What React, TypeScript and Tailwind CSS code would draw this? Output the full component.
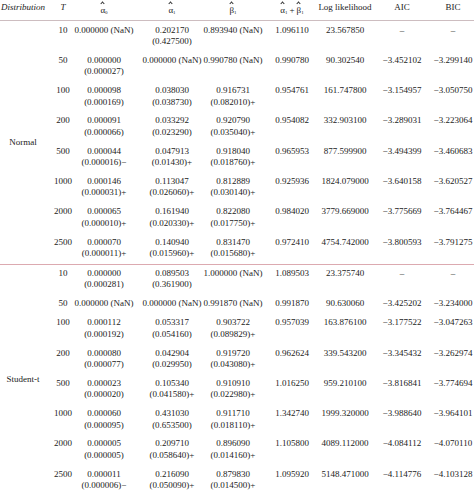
import React from "react";

type Row = {
  t: string;
  a0: string[];
  a1: string[];
  b1: string[];
  s: string;
  ll: string;
  aic: string;
  bic: string;
};

const normal: Row[] = [
  { t: "10", a0: ["0.000000 (NaN)"], a1: ["0.202170", "(0.427500)"], b1: ["0.893940 (NaN)"], s: "1.096110", ll: "23.567850", aic: "–", bic: "–" },
  { t: "50", a0: ["0.000000", "(0.000027)"], a1: ["0.000000 (NaN)"], b1: ["0.990780 (NaN)"], s: "0.990780", ll: "90.302540", aic: "−3.452102", bic: "−3.299140" },
  { t: "100", a0: ["0.000098", "(0.000169)"], a1: ["0.038030", "(0.038730)"], b1: ["0.916731", "(0.082010)+"], s: "0.954761", ll: "161.747800", aic: "−3.154957", bic: "−3.050750" },
  { t: "200", a0: ["0.000091", "(0.000066)"], a1: ["0.033292", "(0.023290)"], b1: ["0.920790", "(0.035040)+"], s: "0.954082", ll: "332.903100", aic: "−3.289031", bic: "−3.223064" },
  { t: "500", a0: ["0.000044", "(0.000016)−"], a1: ["0.047913", "(0.01430)+"], b1: ["0.918040", "(0.018760)+"], s: "0.965953", ll: "877.599900", aic: "−3.494399", bic: "−3.460683" },
  { t: "1000", a0: ["0.000146", "(0.000031)+"], a1: ["0.113047", "(0.026060)+"], b1: ["0.812889", "(0.030140)+"], s: "0.925936", ll: "1824.079000", aic: "−3.640158", bic: "−3.620527" },
  { t: "2000", a0: ["0.000065", "(0.000010)+"], a1: ["0.161940", "(0.020330)+"], b1: ["0.822080", "(0.017750)+"], s: "0.984020", ll: "3779.669000", aic: "−3.775669", bic: "−3.764467" },
  { t: "2500", a0: ["0.000070", "(0.000011)+"], a1: ["0.140940", "(0.015960)+"], b1: ["0.831470", "(0.015680)+"], s: "0.972410", ll: "4754.742000", aic: "−3.800593", bic: "−3.791275" },
];

const student: Row[] = [
  { t: "10", a0: ["0.000000", "(0.000281)"], a1: ["0.089503", "(0.361900)"], b1: ["1.000000 (NaN)"], s: "1.089503", ll: "23.375740", aic: "–", bic: "–" },
  { t: "50", a0: ["0.000000 (NaN)"], a1: ["0.000000 (NaN)"], b1: ["0.991870 (NaN)"], s: "0.991870", ll: "90.630060", aic: "−3.425202", bic: "−3.234000" },
  { t: "100", a0: ["0.000112", "(0.000192)"], a1: ["0.053317", "(0.054160)"], b1: ["0.903722", "(0.089829)+"], s: "0.957039", ll: "163.876100", aic: "−3.177522", bic: "−3.047263" },
  { t: "200", a0: ["0.000080", "(0.000077)"], a1: ["0.042904", "(0.029950)"], b1: ["0.919720", "(0.043080)+"], s: "0.962624", ll: "339.543200", aic: "−3.345432", bic: "−3.262974" },
  { t: "500", a0: ["0.000023", "(0.000020)"], a1: ["0.105340", "(0.041580)+"], b1: ["0.910910", "(0.022980)+"], s: "1.016250", ll: "959.210100", aic: "−3.816841", bic: "−3.774694" },
  { t: "1000", a0: ["0.000060", "(0.000095)"], a1: ["0.431030", "(0.653500)"], b1: ["0.911710", "(0.018110)+"], s: "1.342740", ll: "1999.320000", aic: "−3.988640", bic: "−3.964101" },
  { t: "2000", a0: ["0.000005", "(0.000005)"], a1: ["0.209710", "(0.058640)+"], b1: ["0.896090", "(0.014160)+"], s: "1.105800", ll: "4089.112000", aic: "−4.084112", bic: "−4.070110" },
  { t: "2500", a0: ["0.000011", "(0.000006)−"], a1: ["0.216090", "(0.050090)+"], b1: ["0.879830", "(0.014500)+"], s: "1.095920", ll: "5148.471000", aic: "−4.114776", bic: "−4.103128" },
];

function Cell({ lines }: { lines: string[] }) {
  return (
    <div className="flex flex-col items-center">
      {lines.map((l, i) => (
        <div key={i} className="whitespace-nowrap">
          {l}
        </div>
      ))}
    </div>
  );
}

function Hat({ ch, sub }: { ch: string; sub: string }) {
  return (
    <span className="inline-flex items-end">
      <span className="inline-flex flex-col items-center">
        <span className="block w-[3px] h-[3px] border-l border-t border-[#333] rotate-45 mt-[1px] mb-[0px]" />
        <span className="leading-[10px]">{ch}</span>
      </span>
      <span className="text-[5px] leading-[6px] mb-[-1px]">{sub}</span>
    </span>
  );
}

const rowGrid =
  "grid grid-cols-[34px_48px_88px_34px_84px_22px_92px_10px] pt-[3.5px] pb-[4px] leading-[11.4px]";

function Group({ name, rows, top }: { name: string; rows: Row[]; top?: boolean }) {
  return (
    <div className={top ? "flex border-t border-[#dcaab0]" : "flex"}>
      <div className="w-[46px] shrink-0 flex items-center justify-center whitespace-nowrap">{name}</div>
      <div className="flex flex-col">
        {rows.map((r, i) => (
          <div key={i} className={rowGrid}>
            <Cell lines={[r.t]} />
            <Cell lines={r.a0} />
            <Cell lines={r.a1} />
            <Cell lines={r.b1} />
            <Cell lines={[r.s]} />
            <Cell lines={[r.ll]} />
            <Cell lines={[r.aic]} />
            <Cell lines={[r.bic]} />
          </div>
        ))}
      </div>
    </div>
  );
}

export default function App() {
  return (
    <div className="w-[474px] h-[494px] overflow-hidden bg-white text-[#222] text-[9px] font-['Liberation_Serif',serif]">
      <div className="grid grid-cols-[46px_34px_48px_88px_34px_84px_22px_92px_10px] h-[21px] border-b border-[#cdbdc0] items-center leading-[11px] pb-[5px]">
        <div className="flex justify-center italic whitespace-nowrap">Distribution</div>
        <div className="flex justify-center italic">T</div>
        <div className="flex justify-center"><Hat ch="α" sub="0" /></div>
        <div className="flex justify-center"><Hat ch="α" sub="1" /></div>
        <div className="flex justify-center"><Hat ch="β" sub="1" /></div>
        <div className="flex justify-center whitespace-nowrap">
          <span className="inline-flex items-end gap-[2px]">
            <Hat ch="α" sub="1" />
            <span className="leading-[10px]">+</span>
            <Hat ch="β" sub="1" />
          </span>
        </div>
        <div className="flex justify-center whitespace-nowrap">Log likelihood</div>
        <div className="flex justify-center whitespace-nowrap">AIC</div>
        <div className="flex justify-center whitespace-nowrap">BIC</div>
      </div>
      <Group name="Normal" rows={normal} />
      <Group name="Student-t" rows={student} top />
    </div>
  );
}
